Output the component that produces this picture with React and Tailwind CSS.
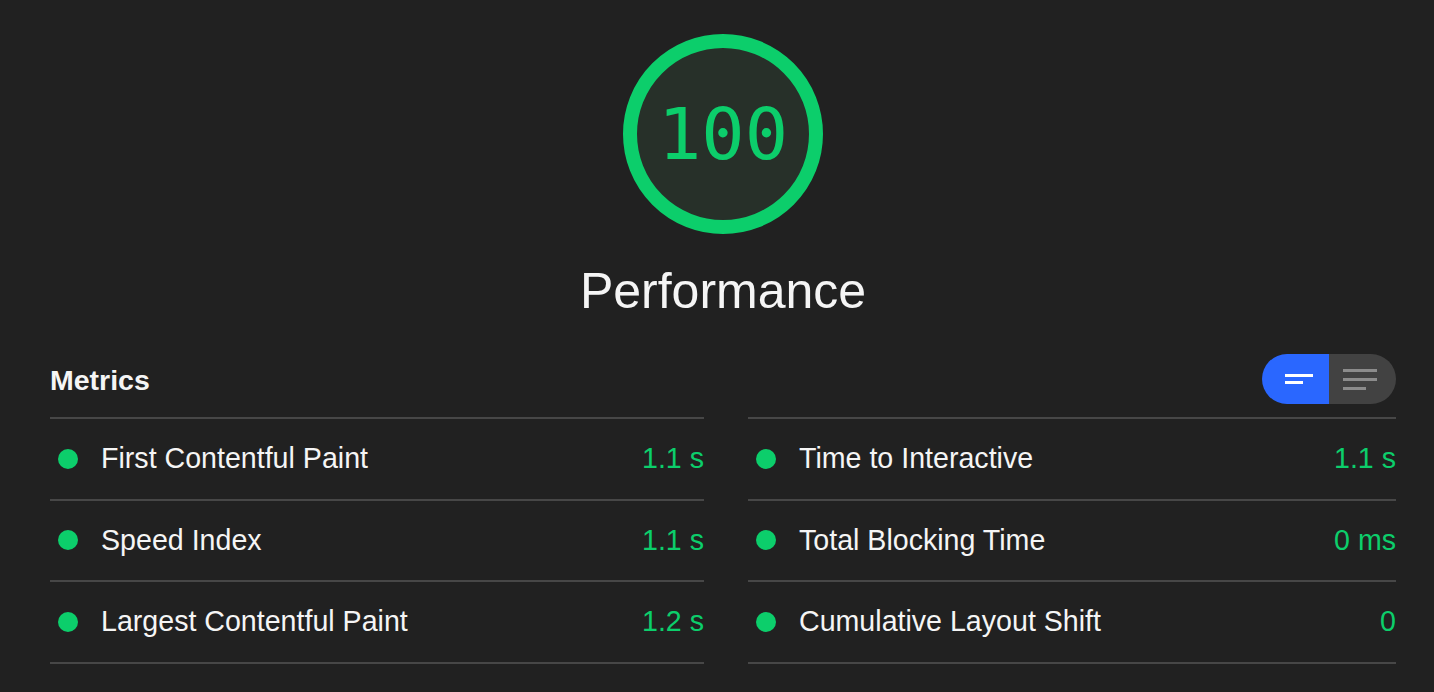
import React from "react";

const metrics = [
  [
    { label: "First Contentful Paint", value: "1.1 s" },
    { label: "Speed Index", value: "1.1 s" },
    { label: "Largest Contentful Paint", value: "1.2 s" },
  ],
  [
    { label: "Time to Interactive", value: "1.1 s" },
    { label: "Total Blocking Time", value: "0 ms" },
    { label: "Cumulative Layout Shift", value: "0" },
  ],
];

const Gauge = ({ score }) => (
  <div className="w-[200px] h-[200px] rounded-full border-[14px] border-[#0cce6b] bg-[#273029] flex items-center justify-center">
    <span className="text-[72px] leading-none text-[#0cce6b] font-['DejaVu_Sans_Mono',monospace]">
      {score}
    </span>
  </div>
);

const ViewToggle = () => (
  <div className="flex h-[50px] rounded-full overflow-hidden">
    <button className="w-[67px] shrink-0 bg-[#2a67ff] flex flex-col items-start justify-center gap-[4px] pl-[23px]">
      <span className="block h-[3px] w-[28px] bg-white"></span>
      <span className="block h-[3px] w-[18px] bg-white"></span>
    </button>
    <button className="w-[67px] shrink-0 bg-[#424242] flex flex-col items-start justify-center gap-[6px] pl-[14px]">
      <span className="block h-[3px] w-[34px] bg-[#8c8c8c]"></span>
      <span className="block h-[3px] w-[34px] bg-[#8c8c8c]"></span>
      <span className="block h-[3px] w-[23px] bg-[#8c8c8c]"></span>
    </button>
  </div>
);

const MetricRow = ({ label, value }) => (
  <div className="h-[81.5px] border-t-2 border-[#474747] flex items-center">
    <span className="ml-[8px] w-5 h-5 rounded-full bg-[#0cce6b]"></span>
    <span className="ml-[23px] text-[28.6px] text-[#f5f5f5]">{label}</span>
    <span className="ml-auto text-[28.6px] text-[#0cce6b]">{value}</span>
  </div>
);

export default function App() {
  return (
    <div className="h-[692px] w-full bg-[#212121] font-['Liberation_Sans',Arial,sans-serif] overflow-hidden pl-[50px] pr-[38px]">
      <div className="flex flex-col items-center pt-[34px]">
        <Gauge score="100" />
        <h2 className="mt-[32px] text-[50px] leading-none text-[#f5f5f5]">Performance</h2>
      </div>

      <div className="mt-[38px]">
        <div className="flex items-center justify-between h-[50px] mb-[13px]">
          <h3 className="text-[28.5px] font-bold text-[#f5f5f5] pt-[3px]">Metrics</h3>
          <ViewToggle />
        </div>
        <div className="grid grid-cols-[654px_648px] gap-x-[44px]">
          {metrics.map((col, i) => (
            <div key={i}>
              {col.map((m) => (
                <MetricRow key={m.label} label={m.label} value={m.value} />
              ))}
              <div className="h-[2px] bg-[#474747]"></div>
            </div>
          ))}
        </div>
      </div>
    </div>
  );
}
